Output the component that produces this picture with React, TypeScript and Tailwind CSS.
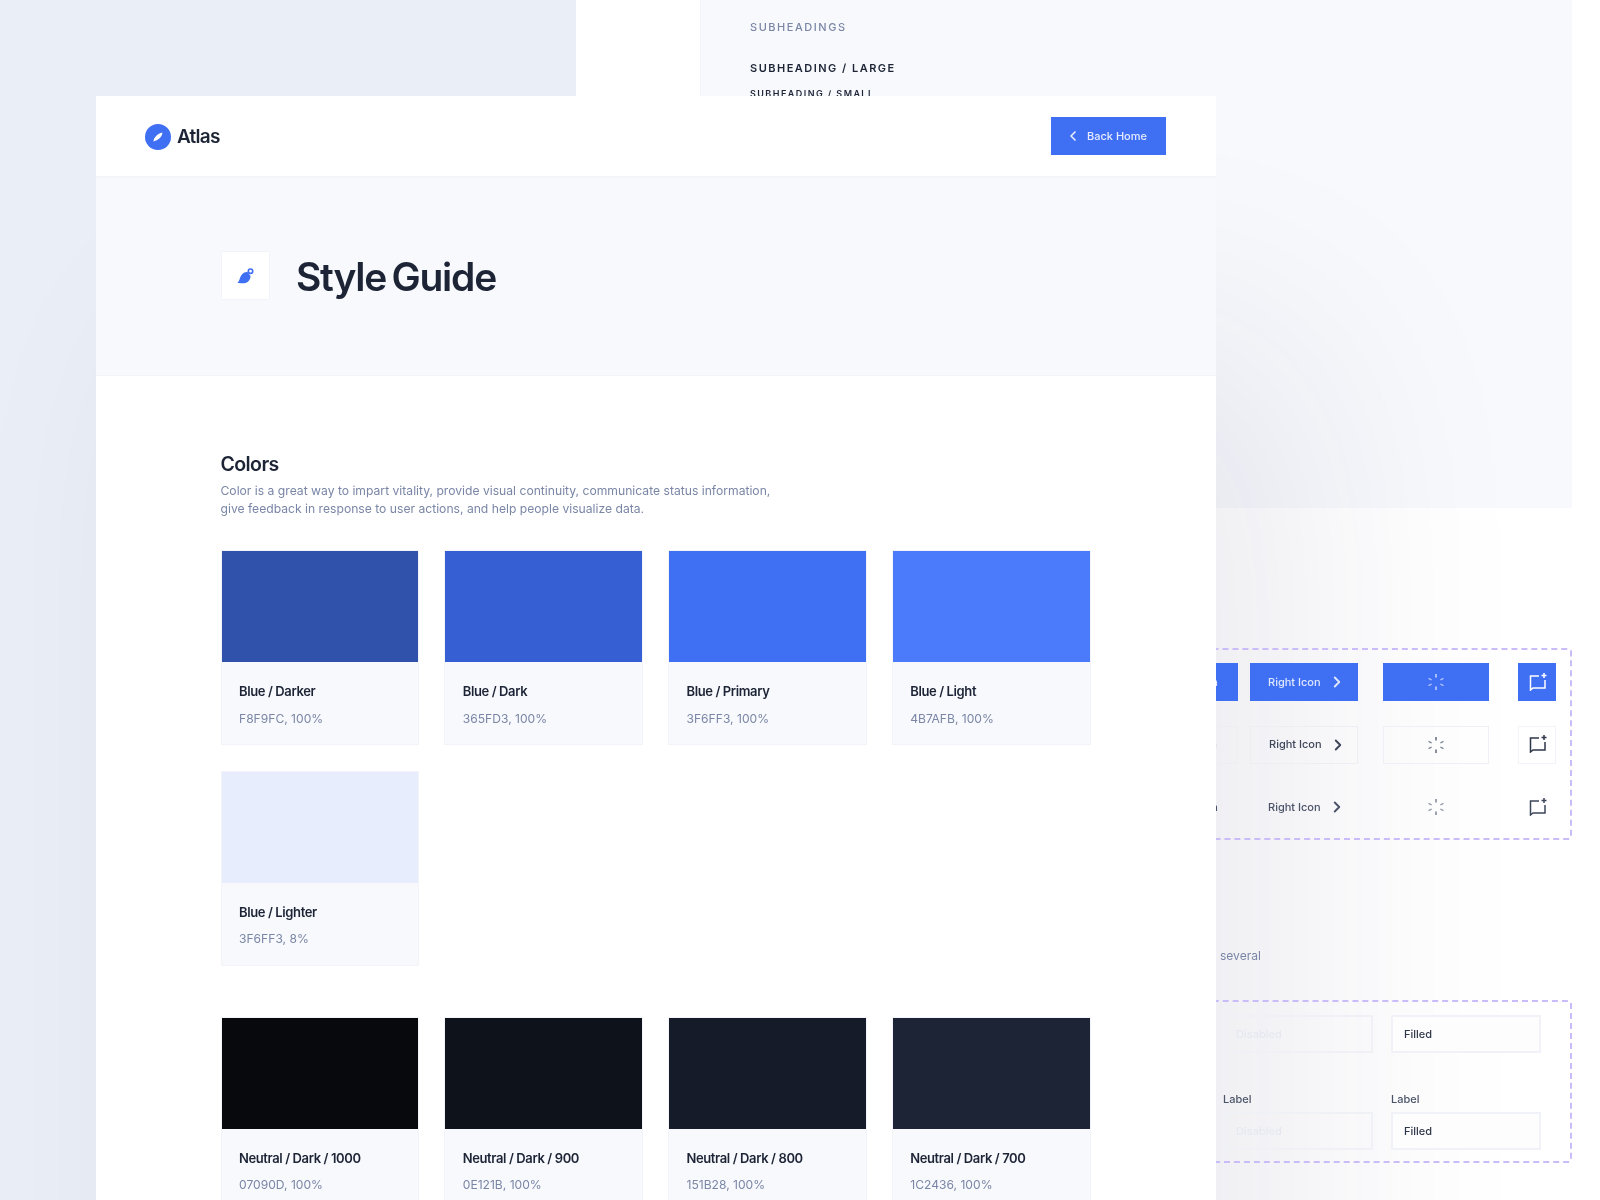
import { ChevronLeft, ChevronRight } from "lucide-react";

const font = { fontFamily: "Inter, 'Liberation Sans', sans-serif" };

type Swatch = { name: string; sub: string; color: string };

const blues: Swatch[] = [
  { name: "Blue / Darker", sub: "F8F9FC, 100%", color: "bg-[#3052ab]" },
  { name: "Blue / Dark", sub: "365FD3, 100%", color: "bg-[#365fd3]" },
  { name: "Blue / Primary", sub: "3F6FF3, 100%", color: "bg-[#3f6ff3]" },
  { name: "Blue / Light", sub: "4B7AFB, 100%", color: "bg-[#4b7afb]" },
  { name: "Blue / Lighter", sub: "3F6FF3, 8%", color: "bg-[#e7edfc]" },
];

const neutrals: Swatch[] = [
  { name: "Neutral / Dark / 1000", sub: "07090D, 100%", color: "bg-[#07090d]" },
  { name: "Neutral / Dark / 900", sub: "0E121B, 100%", color: "bg-[#0e121b]" },
  { name: "Neutral / Dark / 800", sub: "151B28, 100%", color: "bg-[#151b28]" },
  { name: "Neutral / Dark / 700", sub: "1C2436, 100%", color: "bg-[#1c2436]" },
];

function SwatchCard({ s }: { s: Swatch }) {
  return (
    <div className="h-[195px] bg-[#f8f9fc] border border-[#f3f4f9] flex flex-col">
      <div className={`h-[111px] shrink-0 ${s.color}`} />
      <div className="pl-[17.5px] pt-[19px]">
        <div className="text-[13px] leading-[20px] font-semibold tracking-[-0.03em] text-[#1c2436]">{s.name}</div>
        <div className="mt-[7.5px] text-[12.1px] leading-[20px] text-[#7a86a6]">{s.sub}</div>
      </div>
    </div>
  );
}

function ChatPlus({ className }: { className: string }) {
  return (
    <svg viewBox="0 0 20 20" className={className} fill="none" stroke="currentColor" strokeWidth="1.5">
      <path d="M12 5H3.5V19L6 17H18V9" />
      <path d="M17 2v5M14.5 4.5h5" />
    </svg>
  );
}

function Spinner({ className }: { className: string }) {
  return (
    <svg viewBox="0 0 16 16" className={className} fill="none" stroke="currentColor" strokeWidth="1.3">
      <path d="M8 0v3.6M8 12.4v3.6" />
      <path d="M.6 4.4l3 1.6M12.4 10l3 1.6" opacity="0.75" />
      <path d="M.6 11.6l3-1.6M12.4 6l3-1.6" opacity="0.75" />
    </svg>
  );
}

function ButtonRow({
  box,
  text,
  iconBox,
  spin,
}: {
  box: string;
  text: string;
  iconBox: string;
  spin: string;
}) {
  return (
    <div className={`flex items-center justify-end ${text}`}>
      <div className={`w-[100px] h-[38px] flex items-center justify-end pr-[20px] text-[11px] font-medium ${box}`}>Left Icon</div>
      <div className={`ml-[12px] w-[108px] h-[38px] flex items-center pl-[18px] text-[11px] font-medium ${box}`}>
        <span>Right Icon</span>
        <ChevronRight size={18} strokeWidth={2.5} className="ml-[7px]" />
      </div>
      <div className={`ml-[25px] w-[106px] h-[38px] flex items-center justify-center ${spin}`}>
        <Spinner className="w-[16px] h-[16px]" />
      </div>
      <div className={`ml-[29px] w-[38px] h-[38px] flex items-center justify-center ${iconBox}`}>
        <ChatPlus className="w-[20px] h-[20px] -mt-[3px]" />
      </div>
    </div>
  );
}

function Field({ label, value, box, text }: { label?: string; value: string; box: string; text: string }) {
  return (
    <div className="w-[150px]">
      {label && <div className="text-[11px] leading-[16px] mb-[5px] font-medium text-[#4a5368]">{label}</div>}
      <div className={`h-[38px] border-2 flex items-center pl-[11px] text-[11px] font-medium ${box} ${text}`}>{value}</div>
    </div>
  );
}

export default function App() {
  return (
    <div className="relative w-[1600px] h-[1200px] overflow-hidden bg-white blur-[0.4px]" style={font}>
      {/* artboards behind the main sheet */}
      <div className="absolute left-0 top-0 w-[576px] h-full bg-[#eaeef6]" />
      <div className="absolute left-[700px] top-0 w-[872px] h-[508px] bg-[#f8f9fc] border-l border-[#f3f4f9] pl-[49px]">
        <div className="pt-[20px] text-[11px] leading-[14px] font-medium tracking-[0.14em] text-[#7a86a6]">SUBHEADINGS</div>
        <div className="mt-[27px] text-[11px] leading-[14px] font-semibold tracking-[0.135em] text-[#1c2436]">SUBHEADING / LARGE</div>
        <div className="mt-[13px] text-[9px] leading-[12px] font-semibold tracking-[0.16em] text-[#1c2436]">SUBHEADING / SMALL</div>
      </div>

      {/* soft shadow cast by the main sheet on the boards behind it */}
      <div className="absolute left-[96px] top-[96px] w-[1120px] h-[1300px] shadow-[90px_240px_220px_rgba(30,40,90,0.085)]" />

      <div className="absolute left-[1100px] top-[648px] w-[472px] h-[192px] border-2 border-dashed border-[#c9bcf9] rounded-[3px] pr-[14px] pt-[13px] flex flex-col gap-[24.5px]">
        <ButtonRow box="bg-[#3f6ff3]" text="text-[#dfe7fd]" iconBox="bg-[#3f6ff3] text-white" spin="bg-[#3f6ff3] text-[#dfe7fd]" />
        <ButtonRow box="border-[1.5px] border-[#eceef4]" text="text-[#3e465a]" iconBox="border-[1.5px] border-[#f3f4f9] text-[#2f374a]" spin="border-[1.5px] border-[#eff0f6] text-[#4a5368]" />
        <ButtonRow box="" text="text-[#4a5368]" iconBox="text-[#3e465a]" spin="text-[#6a7388]" />
      </div>

      <div className="absolute left-[900px] top-[946px] w-[361px] text-right whitespace-nowrap text-[12.1px] leading-[20px] text-[#7a86a6]">
        Inputs come in several
      </div>

      <div className="absolute left-[1100px] top-[1000px] w-[472px] h-[163px] border-2 border-dashed border-[#c9bcf9] rounded-[3px] pr-[29px] pt-[13px] flex flex-col items-end gap-[38px]">
        <div className="flex gap-[18px]">
          <Field value="Disabled" box="border-[#f0f1f6]" text="text-[#e6e8f0]" />
          <Field value="Filled" box="border-[#f1f2f7] bg-[#fdfdfe]" text="text-[#2f374a]" />
        </div>
        <div className="flex gap-[18px]">
          <Field label="Label" value="Disabled" box="border-[#f0f1f6]" text="text-[#e6e8f0]" />
          <Field label="Label" value="Filled" box="border-[#f1f2f7] bg-[#fdfdfe]" text="text-[#2f374a]" />
        </div>
      </div>

      {/* main sheet */}
      <div className="absolute left-[96px] top-[96px] w-[1120px] h-[1300px] bg-white">
        <header className="h-[82px] border-b-2 border-[#f3f4f8] pl-[49px] pr-[50px] flex items-center justify-between">
          <div className="flex items-center gap-[6px] mt-[1px]">
            <svg viewBox="0 0 26 26" className="w-[26px] h-[26px]">
              <circle cx="13" cy="13" r="13" fill="#3f6ff3" />
              <path d="M17.5 8.5C17 12.5 14 16 8.5 17.5C8.5 13.5 12.5 9.5 17.5 8.5Z" fill="#fff" />
            </svg>
            <span className="text-[19px] leading-[28px] pt-[1px] font-semibold tracking-[-0.04em] text-[#1c2436]">Atlas</span>
          </div>
          <button className="w-[115px] h-[38px] bg-[#3f6ff3] flex items-center pl-[14px] text-[11px] font-medium text-[#e6ecfe]">
            <ChevronLeft size={16} strokeWidth={2.5} />
            <span className="ml-[6px]">Back Home</span>
          </button>
        </header>

        <section className="h-[198px] bg-[#f8f9fc] border-b border-[#f3f4f8] pl-[125px] flex items-center gap-[26px]">
          <div className="w-[49px] h-[49px] -mt-[3px] bg-white border border-[#f3f4f9] flex items-center justify-center">
            <svg viewBox="0 0 20 20" className="w-[22px] h-[22px] -ml-[1px]">
              <path d="M3 17C5 16 5 13 6.5 10.5C8 8 11 7 12.5 7.5L15 11C15 14 13 17.5 9 17.5C7 17.5 5 17.5 3 17Z" fill="#3f6ff3" />
              <circle cx="15" cy="6.5" r="2" fill="#fff" stroke="#3f6ff3" strokeWidth="1.5" />
            </svg>
          </div>
          <h1 className="text-[39px] leading-[48px] mt-[1px] font-semibold tracking-[-0.032em] [word-spacing:-0.08em] text-[#1c2436]">Style Guide</h1>
        </section>

        <main className="pl-[124.5px] pt-[74px]">
          <h2 className="text-[19.5px] leading-[28px] font-semibold tracking-[-0.03em] text-[#1c2436]">Colors</h2>
          <p className="mt-[3.5px] text-[12.15px] leading-[18.5px] text-[#7a86a6]">
            Color is a great way to impart vitality, provide visual continuity, communicate status information,
            <br />
            give feedback in response to user actions, and help people visualize data.
          </p>
          <div className="mt-[31.5px] w-[870px] grid grid-cols-4 gap-x-[25px] gap-y-[25.5px]">
            {blues.map((s) => (
              <SwatchCard key={s.name} s={s} />
            ))}
          </div>
          <div className="mt-[51px] w-[870px] grid grid-cols-4 gap-[25px]">
            {neutrals.map((s) => (
              <SwatchCard key={s.name} s={s} />
            ))}
          </div>
        </main>
      </div>
    </div>
  );
}
